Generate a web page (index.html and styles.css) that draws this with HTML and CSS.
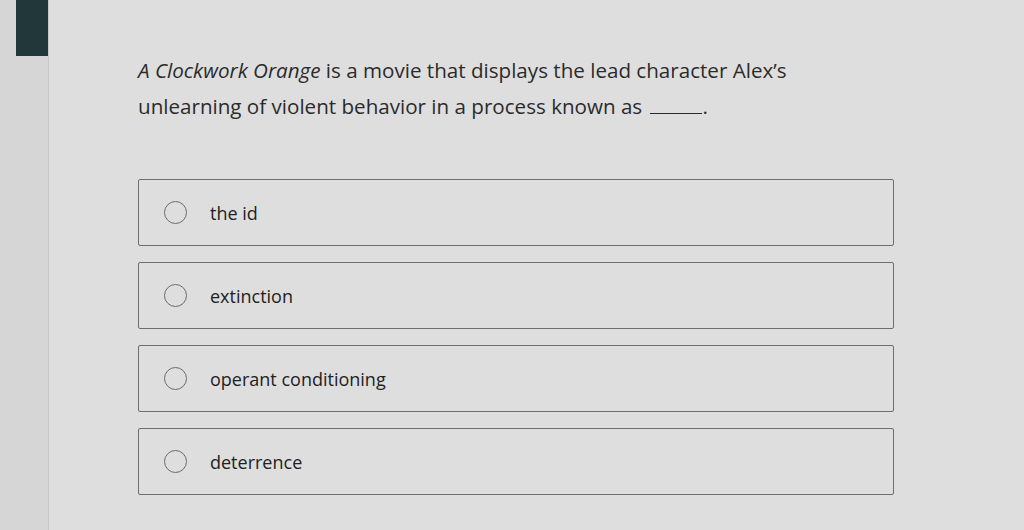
FILE: index.html
```html
<!DOCTYPE html>
<html>
<head>
<meta charset="utf-8">
<link rel="stylesheet" href="styles.css">
</head>
<body>
<div class="page">
  <aside class="side"><div class="side-block"></div></aside>
  <main class="main">
    <p class="question"><em>A Clockwork Orange</em> is a movie that displays the lead character Alex’s unlearning of violent behavior in a process known as <span class="blank"></span>.</p>
    <div class="options">
      <label class="option"><span class="radio"></span><span class="opt-text">the id</span></label>
      <label class="option"><span class="radio"></span><span class="opt-text">extinction</span></label>
      <label class="option"><span class="radio"></span><span class="opt-text">operant conditioning</span></label>
      <label class="option"><span class="radio"></span><span class="opt-text">deterrence</span></label>
    </div>
  </main>
</div>
</body>
</html>
```
FILE: styles.css
```css
html, body {
  margin: 0;
  padding: 0;
  background: #dedede;
  height: 100%;
}
body {
  font-family: "Open Sans", "Noto Sans", sans-serif;
  color: #2b2b2b;
}
.page {
  display: flex;
  min-height: 530px;
}
.side {
  width: 49px;
  flex: none;
  background: #d6d6d6;
  border-right: 1px solid #c6c6c6;
  box-sizing: border-box;
}
.side-block {
  margin-left: 16px;
  width: 32px;
  height: 56px;
  background: #22373a;
}
.main {
  padding: 52px 0 0 89px;
  width: 756px;
}
.question {
  margin: 0;
  font-size: 20.6px;
  line-height: 36px;
  width: 670px;
}
.question em {
  font-style: italic;
}
.blank {
  display: inline-block;
  width: 52px;
  border-bottom: 1px solid #2b2b2b;
  vertical-align: baseline;
  margin-left: 2px;
  margin-right: 1px;
}
.options {
  margin-top: 55px;
  display: flex;
  flex-direction: column;
  gap: 16px;
}
.option {
  display: flex;
  align-items: center;
  height: 67px;
  box-sizing: border-box;
  border: 1px solid #6e6e6e;
  border-radius: 2px;
  padding-left: 25px;
}
.radio {
  width: 21px;
  height: 21px;
  border: 1.5px solid #6a6a6a;
  border-radius: 50%;
  flex: none;
}
.opt-text {
  margin-left: 23px;
  font-size: 18px;
  color: #222;
}
```
